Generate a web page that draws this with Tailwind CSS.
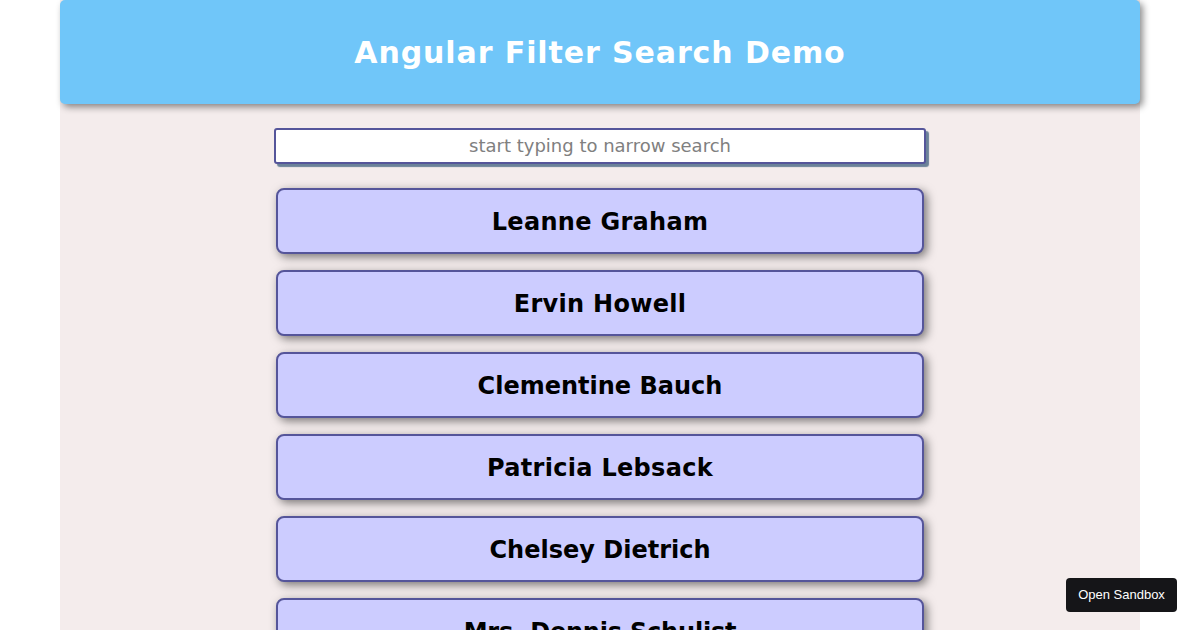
<!DOCTYPE html>
<html lang="en">
<head>
    <meta charset="UTF-8">
    <title>Angular Filter Search Demo</title>
    <script src="https://cdn.jsdelivr.net/npm/@tailwindcss/browser@4"></script>
</head>
<body class="h-[630px] overflow-hidden bg-white font-['DejaVu_Sans',sans-serif]">

    <!-- Page column -->
    <div class="mx-auto h-[630px] w-[1080px] overflow-y-clip bg-[#f4ecec]">

        <header class="flex h-[104px] items-center justify-center rounded-[5px] bg-[#70c6f9] shadow-[3px_3px_7px_rgba(0,0,0,0.45)]">
            <h1 class="text-[30px] font-bold tracking-[0.9px] text-white">Angular Filter Search Demo</h1>
        </header>

        <div class="mx-auto mt-6 flex w-[652px] flex-col items-center">
            <input type="text" placeholder="start typing to narrow search" class="h-9 w-full rounded-[3px] border-2 border-[#55559a] bg-white pb-[2px] text-center text-[18px] text-black shadow-[3px_3px_1px_#6b8299] outline-none placeholder:text-[#808080]">

            <!-- Name list -->
            <ul class="mt-6 flex w-[648px] flex-col gap-4">
                <li class="flex h-[66px] items-center justify-center rounded-lg border-2 border-[#55559a] bg-[#ccccff] pt-[2px] text-2xl font-bold tracking-[0.3px] text-black shadow-[3px_3px_10px_rgba(0,0,0,0.5)]">Leanne Graham</li>
                <li class="flex h-[66px] items-center justify-center rounded-lg border-2 border-[#55559a] bg-[#ccccff] pt-[2px] text-2xl font-bold tracking-[0.3px] text-black shadow-[3px_3px_10px_rgba(0,0,0,0.5)]">Ervin Howell</li>
                <li class="flex h-[66px] items-center justify-center rounded-lg border-2 border-[#55559a] bg-[#ccccff] pt-[2px] text-2xl font-bold text-black shadow-[3px_3px_10px_rgba(0,0,0,0.5)]">Clementine Bauch</li>
                <li class="flex h-[66px] items-center justify-center rounded-lg border-2 border-[#55559a] bg-[#ccccff] pt-[2px] text-2xl font-bold tracking-[0.3px] text-black shadow-[3px_3px_10px_rgba(0,0,0,0.5)]">Patricia Lebsack</li>
                <li class="flex h-[66px] items-center justify-center rounded-lg border-2 border-[#55559a] bg-[#ccccff] pt-[2px] text-2xl font-bold text-black shadow-[3px_3px_10px_rgba(0,0,0,0.5)]">Chelsey Dietrich</li>
                <li class="flex h-[66px] items-center justify-center rounded-lg border-2 border-[#55559a] bg-[#ccccff] pt-[2px] text-2xl font-bold tracking-[-0.2px] text-black shadow-[3px_3px_10px_rgba(0,0,0,0.5)]">Mrs. Dennis Schulist</li>
            </ul>
        </div>
    </div>

    <!-- Sandbox button floats over the page -->
    <a class="fixed right-[23px] bottom-[18px] flex h-[34px] w-[111px] items-center justify-center rounded-[4px] bg-[#151518] font-['Liberation_Sans',sans-serif] text-[13px] text-white">Open Sandbox</a>
</body>
</html>
